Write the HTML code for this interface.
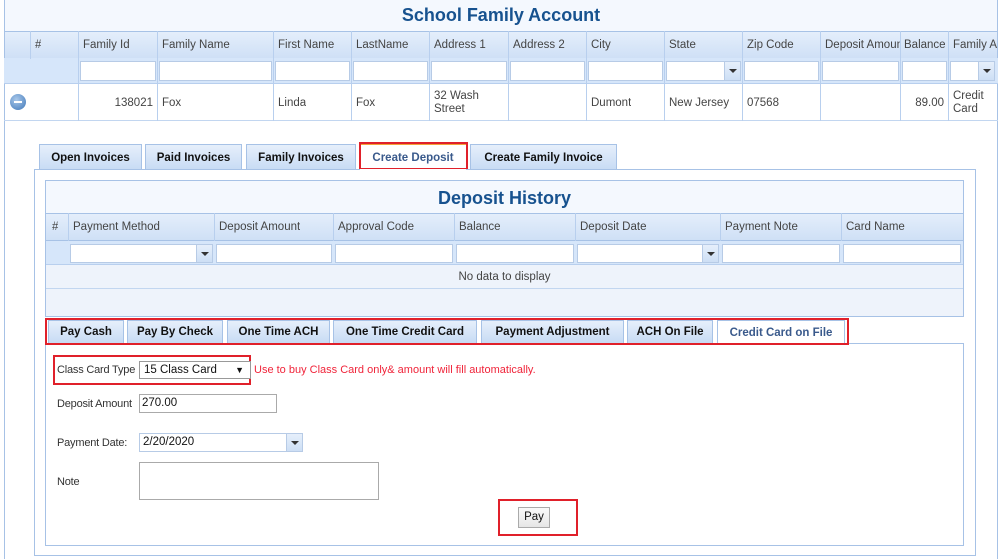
<!DOCTYPE html>
<html><head><meta charset="utf-8"><style>
*{box-sizing:border-box;margin:0;padding:0}
body{width:1000px;height:559px;background:#fff;font-family:"Liberation Sans",sans-serif;font-size:11.5px;color:#333;position:relative;overflow:hidden}
.a{position:absolute;white-space:nowrap}
.hd{background:linear-gradient(#e4eefb,#cfe0f6);border:1px solid #a7c2e6}
.cell{position:absolute;display:flex;align-items:center;padding-left:5px;white-space:nowrap;overflow:hidden;color:#444}
.inp{position:absolute;background:#fff;border:1px solid #b7cbe6}
.dd{position:absolute;width:16px;background:linear-gradient(#e6effb,#cddff5);border-left:1px solid #b7cbe6;top:0;bottom:0;right:0}
.dd:after{content:"";position:absolute;left:4px;top:7px;border:4px solid transparent;border-top:4px solid #333;border-bottom:0}
.tab{position:absolute;background:linear-gradient(#e6effb,#c7dbf4);border:1px solid #a7c2e6;border-bottom:none;font-weight:bold;color:#111;display:flex;align-items:center;justify-content:center;font-size:11.5px;white-space:nowrap}
.act{background:#fff;color:#3a5a8c;font-weight:bold}
.red{position:absolute;border:2px solid #e0202a}
.vl{position:absolute;width:1px;background:#b8cfee}
.lb{font-size:11px;letter-spacing:-0.2px}
</style></head><body>
<div class="a" style="left:4px;top:0;width:994px;height:559px;border-left:1px solid #a7c2e6;border-right:1px solid #a7c2e6;"></div>
<div class="a" style="left:5px;top:0;width:992px;height:31px;background:#f4f8fe;text-align:center;font-size:18px;font-weight:bold;color:#17528f;line-height:31px">School Family Account</div>
<div class="a hd" style="left:4px;top:31px;width:994px;height:28px"></div>
<div class="a" style="left:4px;top:58px;width:994px;height:26px;background:#d6e6fa;border-bottom:1px solid #b8cfee"></div>
<div class="a" style="left:4px;top:83px;width:994px;height:38px;border-bottom:1px solid #c2d6f0"></div>
<div class="cell" style="left:30px;top:31px;height:28px">#</div>
<div class="cell" style="left:78px;top:31px;height:28px">Family Id</div>
<div class="cell" style="left:157px;top:31px;height:28px">Family Name</div>
<div class="cell" style="left:273px;top:31px;height:28px">First Name</div>
<div class="cell" style="left:351px;top:31px;height:28px">LastName</div>
<div class="cell" style="left:429px;top:31px;height:28px">Address 1</div>
<div class="cell" style="left:508px;top:31px;height:28px">Address 2</div>
<div class="cell" style="left:586px;top:31px;height:28px">City</div>
<div class="cell" style="left:664px;top:31px;height:28px">State</div>
<div class="cell" style="left:742px;top:31px;height:28px">Zip Code</div>
<div class="cell" style="left:820px;top:31px;height:28px;width:80px">Deposit Amount</div>
<div class="cell" style="left:900px;top:31px;height:28px;width:48px;padding-left:4px">Balance</div>
<div class="cell" style="left:948px;top:31px;height:28px;width:49px">Family Account</div>
<div class="vl" style="left:30px;top:31px;height:28px"></div>
<div class="vl" style="left:78px;top:31px;height:90px"></div>
<div class="vl" style="left:157px;top:31px;height:90px"></div>
<div class="vl" style="left:273px;top:31px;height:90px"></div>
<div class="vl" style="left:351px;top:31px;height:90px"></div>
<div class="vl" style="left:429px;top:31px;height:90px"></div>
<div class="vl" style="left:508px;top:31px;height:90px"></div>
<div class="vl" style="left:586px;top:31px;height:90px"></div>
<div class="vl" style="left:664px;top:31px;height:90px"></div>
<div class="vl" style="left:742px;top:31px;height:90px"></div>
<div class="vl" style="left:820px;top:31px;height:90px"></div>
<div class="vl" style="left:900px;top:31px;height:90px"></div>
<div class="vl" style="left:948px;top:31px;height:90px"></div>
<div class="inp" style="left:80px;top:61px;width:76px;height:20px"></div>
<div class="inp" style="left:159px;top:61px;width:113px;height:20px"></div>
<div class="inp" style="left:275px;top:61px;width:75px;height:20px"></div>
<div class="inp" style="left:353px;top:61px;width:75px;height:20px"></div>
<div class="inp" style="left:431px;top:61px;width:76px;height:20px"></div>
<div class="inp" style="left:510px;top:61px;width:75px;height:20px"></div>
<div class="inp" style="left:588px;top:61px;width:75px;height:20px"></div>
<div class="inp" style="left:666px;top:61px;width:75px;height:20px"><div class="dd"></div></div>
<div class="inp" style="left:744px;top:61px;width:75px;height:20px"></div>
<div class="inp" style="left:822px;top:61px;width:77px;height:20px"></div>
<div class="inp" style="left:902px;top:61px;width:45px;height:20px"></div>
<div class="inp" style="left:950px;top:61px;width:45px;height:20px"><div class="dd"></div></div>
<div class="a" style="left:10px;top:94px;width:16px;height:16px;border-radius:50%;background:radial-gradient(circle at 40% 35%,#a9c8ea,#3f77b8);"><div class="a" style="left:4px;top:7px;width:8px;height:2px;background:#fff"></div></div>
<div class="cell" style="left:78px;top:84px;height:37px;width:79px;justify-content:flex-end;padding-right:4px">138021</div>
<div class="cell" style="left:157px;top:84px;height:37px">Fox</div>
<div class="cell" style="left:273px;top:84px;height:37px">Linda</div>
<div class="cell" style="left:351px;top:84px;height:37px">Fox</div>
<div class="cell" style="left:429px;top:84px;height:37px;line-height:13px;white-space:normal;width:70px">32 Wash Street</div>
<div class="cell" style="left:586px;top:84px;height:37px">Dumont</div>
<div class="cell" style="left:664px;top:84px;height:37px">New Jersey</div>
<div class="cell" style="left:742px;top:84px;height:37px">07568</div>
<div class="cell" style="left:900px;top:84px;height:37px;width:48px;justify-content:flex-end;padding-right:4px">89.00</div>
<div class="cell" style="left:948px;top:84px;height:37px;line-height:13px;white-space:normal;width:40px">Credit Card</div>
<div class="tab" style="left:39px;top:144px;width:103px;height:26px">Open Invoices</div>
<div class="tab" style="left:145px;top:144px;width:97px;height:26px">Paid Invoices</div>
<div class="tab" style="left:246px;top:144px;width:110px;height:26px">Family Invoices</div>
<div class="tab act" style="left:359px;top:143px;width:108px;height:27px;border-top:2px solid #f3a23a">Create Deposit</div>
<div class="red" style="left:359px;top:142px;width:109px;height:28px"></div>
<div class="tab" style="left:470px;top:144px;width:147px;height:26px">Create Family Invoice</div>
<div class="a" style="left:34px;top:169px;width:942px;height:387px;border:1px solid #a7c2e6"></div>
<div class="a" style="left:360px;top:169px;width:106px;height:2px;background:#fff"></div>
<div class="a" style="left:45px;top:180px;width:919px;height:137px;border:1px solid #a7c2e6;background:#eef3fb"></div>
<div class="a" style="left:46px;top:181px;width:917px;height:32px;background:#f4f8fe;text-align:center;font-size:18px;font-weight:bold;color:#17528f;line-height:34px">Deposit History</div>
<div class="a hd" style="left:45px;top:213px;width:919px;height:28px"></div>
<div class="a" style="left:46px;top:241px;width:917px;height:24px;background:#d6e6fa;border-bottom:1px solid #b8cfee"></div>
<div class="a" style="left:46px;top:265px;width:917px;height:24px;border-bottom:1px solid #c2d6f0;text-align:center;line-height:24px;color:#444">No data to display</div>
<div class="cell" style="left:47px;top:213px;height:28px">#</div>
<div class="cell" style="left:68px;top:213px;height:28px">Payment Method</div>
<div class="cell" style="left:214px;top:213px;height:28px">Deposit Amount</div>
<div class="cell" style="left:333px;top:213px;height:28px">Approval Code</div>
<div class="cell" style="left:454px;top:213px;height:28px">Balance</div>
<div class="cell" style="left:575px;top:213px;height:28px">Deposit Date</div>
<div class="cell" style="left:720px;top:213px;height:28px">Payment Note</div>
<div class="cell" style="left:841px;top:213px;height:28px">Card Name</div>
<div class="vl" style="left:68px;top:213px;height:28px"></div>
<div class="vl" style="left:214px;top:213px;height:28px"></div>
<div class="vl" style="left:333px;top:213px;height:28px"></div>
<div class="vl" style="left:454px;top:213px;height:28px"></div>
<div class="vl" style="left:575px;top:213px;height:28px"></div>
<div class="vl" style="left:720px;top:213px;height:28px"></div>
<div class="vl" style="left:841px;top:213px;height:28px"></div>
<div class="inp" style="left:70px;top:244px;width:143px;height:19px"><div class="dd"></div></div>
<div class="inp" style="left:216px;top:244px;width:116px;height:19px"></div>
<div class="inp" style="left:335px;top:244px;width:118px;height:19px"></div>
<div class="inp" style="left:456px;top:244px;width:118px;height:19px"></div>
<div class="inp" style="left:577px;top:244px;width:142px;height:19px"><div class="dd"></div></div>
<div class="inp" style="left:722px;top:244px;width:118px;height:19px"></div>
<div class="inp" style="left:843px;top:244px;width:118px;height:19px"></div>
<div class="tab" style="left:48px;top:320px;width:76px;height:23px">Pay Cash</div>
<div class="tab" style="left:127px;top:320px;width:96px;height:23px">Pay By Check</div>
<div class="tab" style="left:227px;top:320px;width:103px;height:23px">One Time ACH</div>
<div class="tab" style="left:333px;top:320px;width:144px;height:23px">One Time Credit Card</div>
<div class="tab" style="left:481px;top:320px;width:143px;height:23px">Payment Adjustment</div>
<div class="tab" style="left:627px;top:320px;width:86px;height:23px">ACH On File</div>
<div class="tab act" style="left:717px;top:320px;width:128px;height:24px">Credit Card on File</div>
<div class="a" style="left:45px;top:343px;width:919px;height:203px;border:1px solid #a7c2e6"></div>
<div class="a" style="left:717px;top:343px;width:128px;height:2px;background:#fff"></div>
<div class="red" style="left:45px;top:318px;width:804px;height:27px"></div>
<div class="red" style="left:53px;top:355px;width:198px;height:30px"></div>
<div class="a lb" style="left:57px;top:364px;color:#333">Class Card Type</div>
<div class="a" style="left:139px;top:361px;width:112px;height:18px;border:1px solid #999;background:#fff;padding-left:4px;line-height:16px;color:#111">15 Class Card<span class="a" style="right:6px;top:0;font-size:9px">▼</span></div>
<div class="a" style="left:254px;top:364px;color:#f0243a;font-size:11px">Use to buy Class Card only&amp; amount will fill automatically.</div>
<div class="a lb" style="left:57px;top:398px">Deposit Amount</div>
<div class="a" style="left:139px;top:394px;width:138px;height:19px;border:1px solid #aaa;padding-left:2px;line-height:17px;color:#111">270.00</div>
<div class="a lb" style="left:57px;top:437px">Payment Date:</div>
<div class="a" style="left:139px;top:433px;width:164px;height:19px;border:1px solid #b7cbe6;padding-left:3px;line-height:17px;color:#111">2/20/2020<div class="dd"></div></div>
<div class="a lb" style="left:57px;top:476px">Note</div>
<div class="a" style="left:139px;top:462px;width:240px;height:38px;border:1px solid #aaa"></div>
<div class="red" style="left:498px;top:499px;width:80px;height:37px"></div>
<div class="a" style="left:518px;top:507px;width:32px;height:21px;border:1px solid #aaa;background:linear-gradient(#fafafa,#e6e6e6);text-align:center;line-height:19px;color:#111">Pay</div>
</body></html>
